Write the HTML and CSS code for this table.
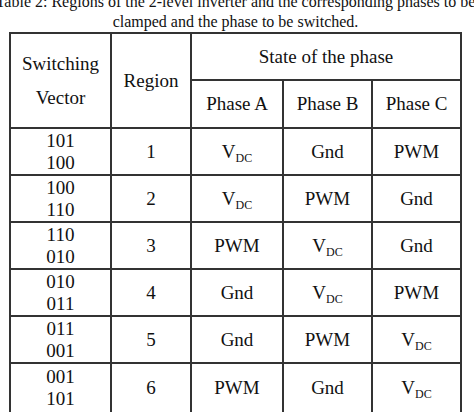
FILE: index.html
```html
<!DOCTYPE html>
<html>
<head>
<meta charset="utf-8">
<link rel="stylesheet" href="styles.css">
</head>
<body>
<div class="caption">
  <span class="cap-line">Table 2: Regions of the 2-level inverter and the corresponding phases to be</span>
  <span class="cap-line">clamped and the phase to be switched.</span>
</div>
<table class="grid">
  <colgroup>
    <col class="c1"><col class="c2"><col class="c3"><col class="c4"><col class="c5">
  </colgroup>
  <tr class="h1">
    <td rowspan="2" class="tall">Switching<br>Vector</td>
    <td rowspan="2">Region</td>
    <td colspan="3">State of the phase</td>
  </tr>
  <tr class="h2">
    <td>Phase A</td><td>Phase B</td><td>Phase C</td>
  </tr>
  <tr class="r">
    <td class="bin">101<br>100</td><td>1</td><td>V<sub class="sub">DC</sub></td><td>Gnd</td><td>PWM</td>
  </tr>
  <tr class="r">
    <td class="bin">100<br>110</td><td>2</td><td>V<sub class="sub">DC</sub></td><td>PWM</td><td>Gnd</td>
  </tr>
  <tr class="r">
    <td class="bin">110<br>010</td><td>3</td><td>PWM</td><td>V<sub class="sub">DC</sub></td><td>Gnd</td>
  </tr>
  <tr class="r">
    <td class="bin">010<br>011</td><td>4</td><td>Gnd</td><td>V<sub class="sub">DC</sub></td><td>PWM</td>
  </tr>
  <tr class="r">
    <td class="bin">011<br>001</td><td>5</td><td>Gnd</td><td>PWM</td><td>V<sub class="sub">DC</sub></td>
  </tr>
  <tr class="r last">
    <td class="bin">001<br>101</td><td>6</td><td>PWM</td><td>Gnd</td><td>V<sub class="sub">DC</sub></td>
  </tr>
</table>
</body>
</html>
```
FILE: styles.css
```css
html, body {
  margin: 0;
  padding: 0;
  background: #ffffff;
}
body {
  font-family: "Liberation Serif", "Times New Roman", serif;
  color: #111111;
  overflow: hidden;
}
.caption {
  width: 471px;
  margin-top: -8px;
  display: flex;
  flex-direction: column;
  align-items: center;
  font-size: 16px;
  line-height: 19.5px;
}
.cap-line {
  white-space: nowrap;
}
.grid {
  margin-top: 1px;
  margin-left: 9px;
  width: 453px;
  table-layout: fixed;
  border-collapse: separate;
  border-spacing: 0;
  border-top: 2px solid #333333;
  border-left: 2px solid #333333;
  font-size: 19px;
}
.c1 { width: 101px; }
.c2 { width: 80px; }
.c3 { width: 92px; }
.c4 { width: 89px; }
.c5 { width: 89px; }
.grid td {
  padding: 0;
  text-align: center;
  vertical-align: middle;
  border-right: 2px solid #333333;
  border-bottom: 2px solid #333333;
  line-height: 22px;
}
.h1 { height: 47px; }
.h2 { height: 48px; }
.r { height: 47px; }
.r.last { height: 50px; }
.grid td.tall { line-height: 34px; }
.grid td.bin { line-height: 22px; }
.sub {
  font-size: 12px;
  vertical-align: -4px;
  line-height: 0;
}
```
